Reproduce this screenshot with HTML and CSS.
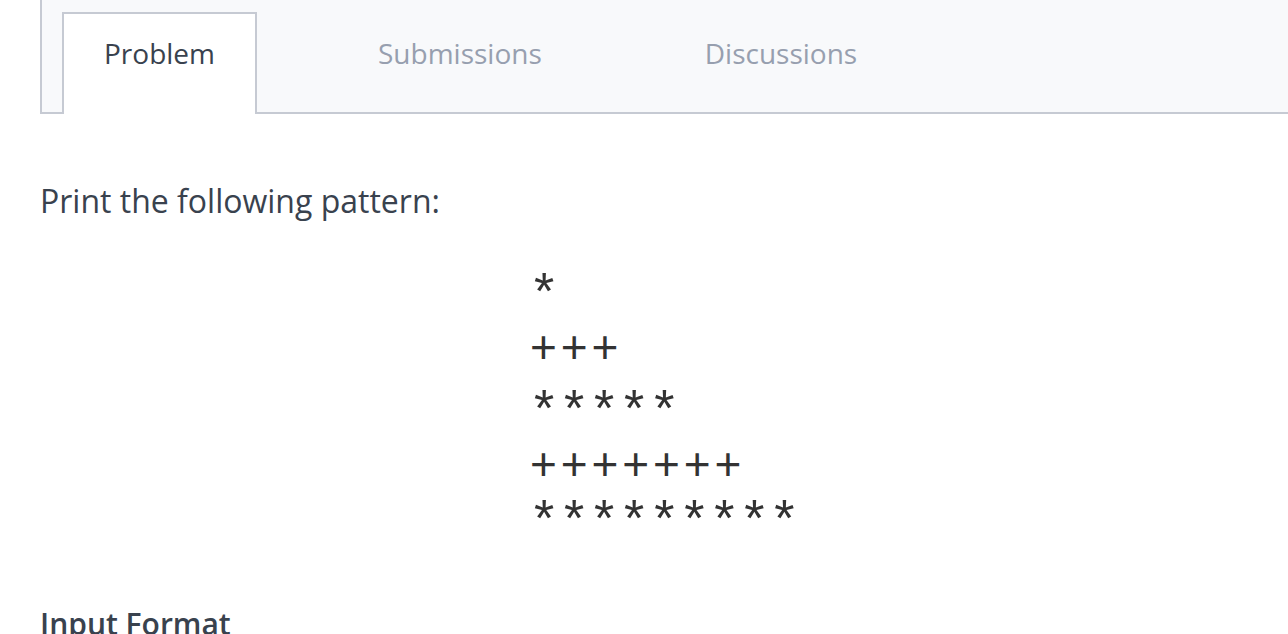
FILE: index.html
```html
<!DOCTYPE html>
<html lang="en">
<head>
  <meta charset="UTF-8">
  <title>Problem</title>
  <link rel="stylesheet" href="styles.css">
</head>
<body>
<div class="page">
  <div class="tabs">
    <div class="tab active">Problem</div>
    <div class="tab">Submissions</div>
    <div class="tab">Discussions</div>
  </div>

  <div class="statement">
    <p class="lead">Print the following pattern:</p>

    <div class="pattern">
      <div class="row stars row-1">*</div>
      <div class="row plus row-2">+++</div>
      <div class="row stars row-3">*****</div>
      <div class="row plus row-4">+++++++</div>
      <div class="row stars row-5">*********</div>
    </div>

    <h3 class="section">Input Format</h3>
  </div>
</div>
</body>
</html>
```

FILE: styles.css
```css
body {
  margin: 0;
  background: #fff;
  font-family: "Open Sans", "Noto Sans", sans-serif;
  color: #39424e;
  overflow: hidden;
}

.page {
  padding-left: 40px;
}

.tabs {
  display: flex;
  align-items: flex-start;
  height: 112px;
  background: #f8f9fb;
  border-left: 2px solid #c6cad3;
  border-bottom: 2px solid #c6cad3;
  padding-left: 20px;
}

.tab {
  box-sizing: border-box;
  margin: 12px 79px -2px 0;
  height: 102px;
  padding: 19px 40px 0;
  line-height: 40px;
  font-size: 28px;
  color: #979faf;
  border: 2px solid transparent;
  border-bottom: none;
}

.tab.active {
  background: #fff;
  color: #39424e;
  border-color: #c6cad3;
}

.statement {
  padding-top: 67px;
}

.lead {
  margin: 0;
  font-size: 32px;
  line-height: 40px;
}

.pattern {
  width: 280px;
  margin: 50px auto 0;
  padding-left: 6px;
  box-sizing: border-box;
  font-family: "Liberation Sans", Arial, sans-serif;
  color: #333;
}

.row {
  white-space: pre;
  height: 40px;
  line-height: 40px;
}

.stars {
  font-size: 52px;
  letter-spacing: 9.8px;
  padding-left: 4px;
}

.plus {
  font-size: 46px;
  letter-spacing: 3.9px;
}

.row-2 { margin-top: 16px; }
.row-3 { margin-top: 21px; }
.row-4 { margin-top: 16px; }
.row-5 { margin-top: 14px; }

.section {
  margin: 66px 0 0;
  font-size: 30px;
  line-height: 40px;
  font-weight: 600;
}
```
